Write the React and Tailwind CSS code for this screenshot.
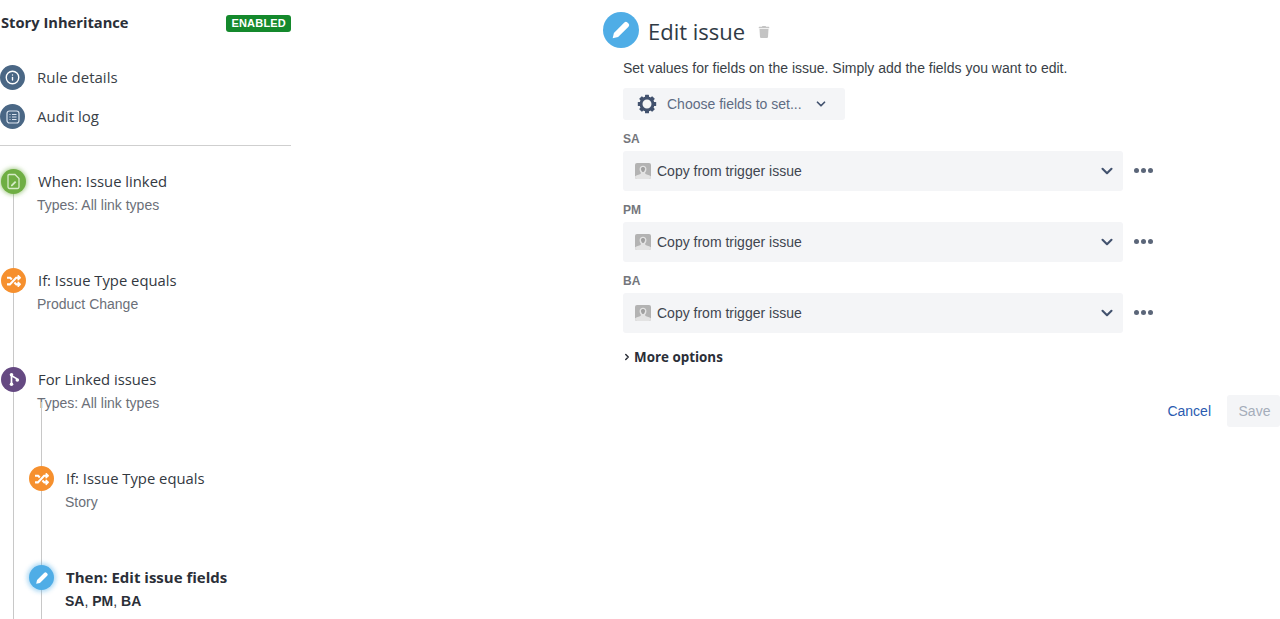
import React from "react";
import { FaTrash, FaRandom } from "react-icons/fa";
import { ChevronDown, ChevronRight, Info } from "lucide-react";

const arial = "font-['Liberation_Sans',Arial,sans-serif]";
const ui = "font-['Open_Sans','Noto_Sans',sans-serif]";

function Pen({ size = 14 }) {
  return (
    <svg width={size} height={size} viewBox="0 0 24 24" fill="white">
      <path d="M2 22l1.500-6.500L16 3a2.600 2.600 0 0 1 3.700 0l1.300 1.300a2.600 2.600 0 0 1 0 3.700L8.500 20.500 2 22z" />
    </svg>
  );
}

function Doc() {
  return (
    <svg width="15" height="17" viewBox="0 0 15 17" fill="none" stroke="#d6ecc8" strokeWidth="1.3">
      <path d="M3 1.500h6l4 4v8.500a1.500 1.500 0 0 1-1.500 1.500h-8A1.500 1.500 0 0 1 2 14V2.500a1 1 0 0 1 1-1z" />
      <path d="M5 12l4-4 1.300 1.300-4 4H5z" fill="#d6ecc8" stroke="none" />
    </svg>
  );
}

function Branch() {
  return (
    <svg width="15" height="15" viewBox="0 0 15 15" fill="none" stroke="white" strokeWidth="1.700">
      <circle cx="5.500" cy="12.300" r="1.800" fill="white" stroke="none" />
      <circle cx="5.500" cy="2.700" r="1.800" fill="white" stroke="none" />
      <circle cx="11.300" cy="8" r="1.800" fill="white" stroke="none" />
      <path d="M5.500 3v9M5.500 3c.5 2.500 5.500 2 5.800 5" />
    </svg>
  );
}

function Gear() {
  const teeth = [0, 45, 90, 135, 180, 225, 270, 315];
  return (
    <svg width="20" height="20" viewBox="0 0 20 20" fill="none" className="shrink-0">
      {teeth.map((a) => (
        <rect key={a} x="8" y="0.800" width="4" height="4" rx="0.500" fill="#42526e" transform={`rotate(${a} 10 10)`} />
      ))}
      <circle cx="10" cy="10" r="6" stroke="#42526e" strokeWidth="3" />
    </svg>
  );
}

function ListIcon() {
  return (
    <svg width="14" height="14" viewBox="0 0 14 14" fill="none" stroke="#dbe4f0" strokeWidth="1.200">
      <rect x="1" y="1" width="12" height="12" rx="2.500" />
      <path d="M3.500 4.500h1M6 4.500h4.500M3.500 7h1M6 7h4.500M3.500 9.500h1M6 9.500h4.500" />
    </svg>
  );
}

function Avatar() {
  return (
    <svg width="16" height="16" viewBox="0 0 16 16" className="shrink-0 rounded-[2px]">
      <rect width="16" height="16" fill="#b3b3b3" />
      <path d="M0 16v-2.500c1.500-1.500 4-1.700 5.500-2.500L6 9.800C5 9 4.500 7.500 4.600 5.800 4.800 3.800 6.200 2.700 8 2.700s3.200 1.100 3.400 3.100c.1 1.700-.4 3.200-1.400 4l.5 1.200c1.500.8 4 1 5.500 2.500V16z" fill="#e3e3e3" />
      <path d="M6 5.500c.2-1 1-1.500 2-1.500s1.800.5 2 1.500c.1 1.500-.6 3.500-2 3.500S5.900 7 6 5.500z" fill="#a0a0a0" />
    </svg>
  );
}

function Circle({ bg, glow, children }) {
  return (
    <div className={`relative z-10 flex h-[25px] w-[25px] shrink-0 items-center justify-center rounded-full ${bg} ${glow}`}>
      {children}
    </div>
  );
}

function Step({ icon, bg, glow = "", title, sub, bold = false, subClass = "text-[#6b6f78]" }) {
  return (
    <div className="flex h-[99px] items-start pl-[1px]">
      <Circle bg={bg} glow={glow}>{icon}</Circle>
      <div className="ml-[12px] -mt-[1px]">
        <div className={`${ui} h-[26px] leading-[26px] whitespace-nowrap ${bold ? "text-[15px] font-bold text-[#2b2f38]" : "text-[14.800px] text-[#33383f]"}`}>{title}</div>
        <div className={`${arial} -ml-[1px] -mt-[1px] text-[14px] leading-[24px] whitespace-nowrap ${subClass}`}>{sub}</div>
      </div>
    </div>
  );
}

function NavItem({ icon, label }) {
  return (
    <div className="flex h-[25px] items-center">
      <div className="flex h-[25px] w-[25px] items-center justify-center rounded-full bg-[#4a6785]">{icon}</div>
      <span className={`${ui} ml-[12px] text-[15px] text-[#3a3f47]`}>{label}</span>
    </div>
  );
}

function Field({ label }) {
  return (
    <div>
      <div className={`${arial} h-[19px] text-[12px] font-bold leading-[14px] text-[#74767c]`}>{label}</div>
      <div className="flex items-center">
        <div className="flex h-[40px] w-[500px] items-center rounded-[3px] bg-[#f4f5f7] pl-[12px] pr-[7px]">
          <Avatar />
          <span className={`${arial} ml-[6px] flex-1 text-[14px] text-[#3f4650]`}>Copy from trigger issue</span>
          <ChevronDown size={18} strokeWidth={2.800} className="text-[#42526e]" />
        </div>
        <div className="ml-[11px] -mt-[2px] flex gap-[2px]">
          <span className="h-[5px] w-[5px] rounded-full bg-[#5b6679]" />
          <span className="h-[5px] w-[5px] rounded-full bg-[#5b6679]" />
          <span className="h-[5px] w-[5px] rounded-full bg-[#5b6679]" />
        </div>
      </div>
      <div className="h-[12px]" />
    </div>
  );
}

export default function App() {
  return (
    <div className="flex h-[619px] w-[1280px] overflow-hidden bg-white">
      <aside className="relative h-[619px] w-[291px] shrink-0 overflow-hidden">
        <div className="flex h-[46px] items-center justify-between">
          <span className={`${ui} -mt-[2px] pl-[1px] text-[14.700px] font-bold text-[#2b2f38]`}>Story Inheritance</span>
          <span className={`${arial} rounded-[3px] bg-[#14892c] px-[5px] text-[11px] font-bold leading-[17px] tracking-[0.200px] text-white`}>ENABLED</span>
        </div>
        <div className="mt-[19px] flex flex-col gap-[14px]">
          <NavItem icon={<Info size={15} strokeWidth={2.200} className="text-white" />} label="Rule details" />
          <NavItem icon={<ListIcon />} label="Audit log" />
        </div>
        <div className="mt-[16px] h-px bg-[#cfcfcf]" />
        <div className="relative mt-[23px]">
          <div className="absolute left-[13px] top-[12px] h-[500px] w-px bg-[#c8c8c8]" />
          <Step icon={<Doc />} bg="bg-[#6fae43]" glow="shadow-[0_0_4px_1px_rgba(111,174,67,0.6)]" title="When: Issue linked" sub="Types: All link types" />
          <Step icon={<FaRandom size={14} className="text-white" />} bg="bg-[#f6902e]" title="If: Issue Type equals" sub="Product Change" />
          <Step icon={<Branch />} bg="bg-[#654982]" title="For Linked issues" sub="Types: All link types" />
          <div className="relative pl-[28px]">
            <div className="absolute left-[41px] top-[-64px] h-[300px] w-px bg-[#c8c8c8]" />
            <Step icon={<FaRandom size={14} className="text-white" />} bg="bg-[#f6902e]" title="If: Issue Type equals" sub="Story" />
            <Step
              icon={<Pen size={14} />}
              bg="bg-[#4fade6]"
              glow="shadow-[0_0_4px_2px_rgba(79,173,230,0.45)]"
              title="Then: Edit issue fields"
              bold
              subClass="text-[#2b2f38]"
              sub={<><b>SA</b>, <b>PM</b>, <b>BA</b></>}
            />
          </div>
        </div>
      </aside>

      <main className="ml-[312px] h-[619px] w-[677px] shrink-0">
        <div className="flex items-center pt-[12px]">
          <div className="flex h-[36px] w-[36px] items-center justify-center rounded-full bg-[#4fade6]">
            <Pen size={20} />
          </div>
          <h1 className={`${ui} ml-[9px] h-[36px] pt-[1px] text-[22px] leading-[36px] text-[#2f3a45]`}>Edit issue</h1>
          <FaTrash size={12} className="ml-[13px] mt-[4px] text-[#c4c4c4]" />
        </div>
        <div className="pl-[20px]">
          <p className={`${arial} mt-[11px] text-[14px] leading-[18px] text-[#3a3f47]`}>Set values for fields on the issue. Simply add the fields you want to edit.</p>
          <div className="mt-[11px] flex h-[32px] w-[222px] items-center rounded-[3px] bg-[#f4f5f7] pl-[14px]">
            <Gear />
            <span className={`${arial} ml-[10px] text-[14px] text-[#5e6c84]`}>Choose fields to set...</span>
            <ChevronDown size={14} strokeWidth={3} className="ml-[12px] text-[#42526e]" />
          </div>
          <div className="mt-[12px]">
            <Field label="SA" />
            <Field label="PM" />
            <Field label="BA" />
          </div>
          <div className={`${ui} flex h-[24px] items-center text-[13.400px] font-bold text-[#2b2f38]`}>
            <ChevronRight size={10} strokeWidth={3.500} className="mr-[2px] -ml-[1px]" />
            More options
          </div>
        </div>
        <div className="mt-[26px] flex items-center justify-end">
          <span className={`${arial} text-[14px] text-[#2a5bb0]`}>Cancel</span>
          <div className={`${arial} ml-[16px] flex h-[32px] w-[53px] items-center justify-center rounded-[3px] bg-[#f4f5f7] pl-[2px] text-[14px] text-[#a5adba]`}>Save</div>
        </div>
      </main>
    </div>
  );
}
